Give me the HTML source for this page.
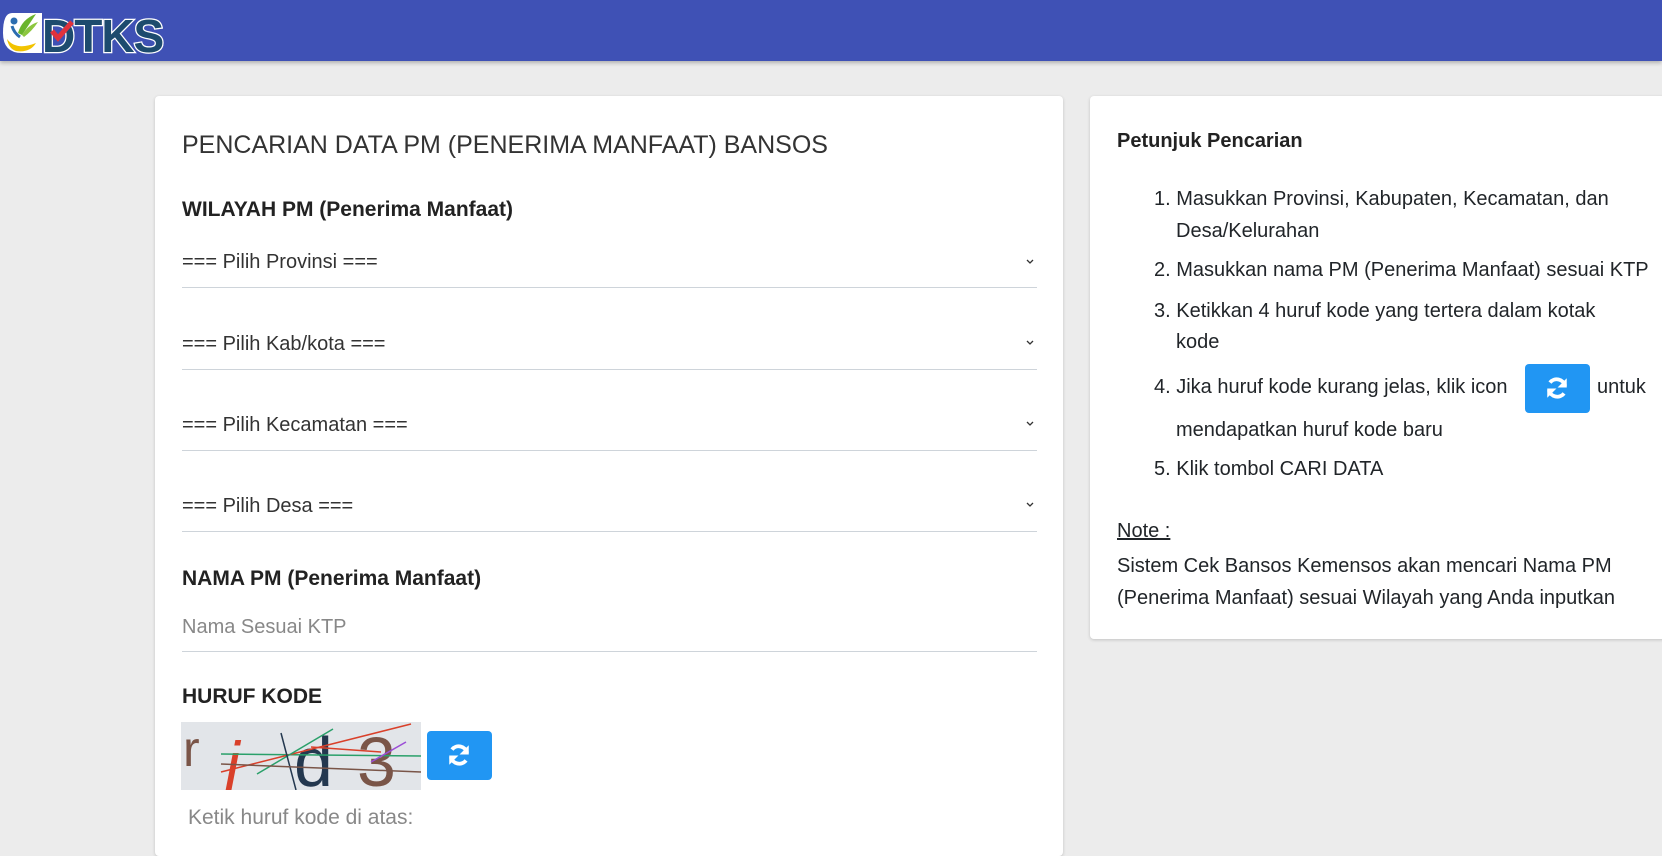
<!DOCTYPE html>
<html><head><meta charset="utf-8"><style>
*{margin:0;padding:0;box-sizing:border-box}
body{width:1662px;height:823px;overflow:hidden;background:#ececec;font-family:"Liberation Sans",sans-serif;color:#212529;position:relative}
.hdr{position:absolute;left:0;top:0;width:1662px;height:61px;background:#3f51b5;box-shadow:0 2px 4px rgba(0,0,0,.25)}
.card{position:absolute;background:#fff;border-radius:4px;box-shadow:0 1px 3px rgba(0,0,0,.18)}
.a{position:absolute;white-space:nowrap}
.t{font-size:20px}
.b{font-size:21px;font-weight:bold;color:#222}
.line{position:absolute;left:182px;width:855px;height:1px;background:#ced4da}
.chev{position:absolute;left:1025px;width:10px;height:10px}
.btn{position:absolute;background:#2196f3;border-radius:4px}
</style></head><body>
<div class="hdr">
<svg width="175" height="58" viewBox="0 0 175 58" style="position:absolute;left:0;top:3px">
<path d="M12 10 H42 V50 H22 Q3 50 3 30 Q3 10 12 10Z" fill="#fff"/>
<circle cx="14" cy="18" r="3.5" fill="#2b6cb0"/>
<path d="M12 23 Q14 30 20 34" stroke="#2b6cb0" stroke-width="3" fill="none"/>
<path d="M18 30 Q22 16 36 11 Q30 20 22 32Z" fill="#6ab42d"/>
<path d="M22 32 Q28 22 38 19 Q32 28 24 34Z" fill="#8cc63f"/>
<path d="M7 36 Q16 48 36 40 Q30 50 16 48 Q9 46 7 36Z" fill="#f2c300"/>
<text x="42" y="49" font-family="Liberation Sans" font-weight="bold" font-size="46" fill="#1d4b6e" stroke="#fff" stroke-width="2.5" paint-order="stroke" letter-spacing="-1">DTKS</text>
<path d="M52 28 L58 35 L72 19" stroke="#e0323c" stroke-width="5" fill="none"/>
</svg>
</div>

<div class="card" style="left:155px;top:96px;width:908px;height:760px"></div>
<div class="card" style="left:1090px;top:96px;width:600px;height:543px"></div>

<div class="a" style="left:182px;top:131px;font-size:25px;color:#333">PENCARIAN DATA PM (PENERIMA MANFAAT) BANSOS</div>
<div class="a b" style="left:182px;top:198px">WILAYAH PM (Penerima Manfaat)</div>

<div class="a t" style="left:182px;top:251px;color:#333">=== Pilih Provinsi ===</div>
<div class="line" style="top:287px"></div>
<div class="a t" style="left:182px;top:333px;color:#333">=== Pilih Kab/kota ===</div>
<div class="line" style="top:369px"></div>
<div class="a t" style="left:182px;top:414px;color:#333">=== Pilih Kecamatan ===</div>
<div class="line" style="top:450px"></div>
<div class="a t" style="left:182px;top:495px;color:#333">=== Pilih Desa ===</div>
<div class="line" style="top:531px"></div>
<svg class="chev" style="top:257px" viewBox="0 0 10 10"><path d="M2 3 L5 6 L8 3" stroke="#333" stroke-width="1.3" fill="none"/></svg>
<svg class="chev" style="top:338px" viewBox="0 0 10 10"><path d="M2 3 L5 6 L8 3" stroke="#333" stroke-width="1.3" fill="none"/></svg>
<svg class="chev" style="top:419px" viewBox="0 0 10 10"><path d="M2 3 L5 6 L8 3" stroke="#333" stroke-width="1.3" fill="none"/></svg>
<svg class="chev" style="top:500px" viewBox="0 0 10 10"><path d="M2 3 L5 6 L8 3" stroke="#333" stroke-width="1.3" fill="none"/></svg>

<div class="a b" style="left:182px;top:567px">NAMA PM (Penerima Manfaat)</div>
<div class="a t" style="left:182px;top:616px;color:#888">Nama Sesuai KTP</div>
<div class="line" style="top:651px"></div>
<div class="a b" style="left:182px;top:685px">HURUF KODE</div>

<svg style="position:absolute;left:181px;top:722px" width="240" height="68" viewBox="0 0 240 68">
<rect width="240" height="68" fill="#e2e5e9"/>
<text x="2" y="44" font-family="Liberation Sans" font-size="50" fill="#7a5548">r</text>
<text x="44" y="66" font-family="Liberation Sans" font-style="italic" font-size="66" fill="#d9402a">j</text>
<text x="113" y="64" font-family="Liberation Sans" font-size="70" fill="#24384f">d</text>
<text x="176" y="64" font-family="Liberation Sans" font-size="70" fill="#7a5548">3</text>
<line x1="40" y1="32" x2="240" y2="34" stroke="#2aa06a" stroke-width="1.5"/>
<line x1="40" y1="50" x2="230" y2="2" stroke="#d9402a" stroke-width="1.5"/>
<line x1="76" y1="52" x2="152" y2="7" stroke="#2aa06a" stroke-width="1.5"/>
<line x1="100" y1="11" x2="115" y2="68" stroke="#24384f" stroke-width="1.5"/>
<line x1="40" y1="42" x2="240" y2="50" stroke="#7a5548" stroke-width="1.5"/>
<line x1="130" y1="25" x2="200" y2="30" stroke="#d9402a" stroke-width="1.5"/>
<line x1="190" y1="40" x2="225" y2="20" stroke="#9b4dd6" stroke-width="1.5"/>
</svg>
<div class="btn" style="left:427px;top:731px;width:65px;height:49px">
<svg width="26" height="26" viewBox="0 0 24 24" style="position:absolute;left:19px;top:11px"><path d="M19.5 10 A8 8 0 0 0 5.5 7" stroke="#fff" stroke-width="3.5" fill="none"/><path d="M21 3 V11.5 H12.5Z" fill="#fff"/><path d="M4.5 14 A8 8 0 0 0 18.5 17" stroke="#fff" stroke-width="3.5" fill="none"/><path d="M3 21 V12.5 H11.5Z" fill="#fff"/></svg>
</div>
<div class="a" style="left:188px;top:806px;color:#888;font-size:21px">Ketik huruf kode di atas:</div>

<div class="a" style="left:1117px;top:130px;font-weight:bold;font-size:20px;color:#222">Petunjuk Pencarian</div>
<div class="a t" style="left:1154px;top:188px">1. Masukkan Provinsi, Kabupaten, Kecamatan, dan</div>
<div class="a t" style="left:1176px;top:220px">Desa/Kelurahan</div>
<div class="a t" style="left:1154px;top:259px">2. Masukkan nama PM (Penerima Manfaat) sesuai KTP</div>
<div class="a t" style="left:1154px;top:300px">3. Ketikkan 4 huruf kode yang tertera dalam kotak</div>
<div class="a t" style="left:1176px;top:331px">kode</div>
<div class="a t" style="left:1154px;top:376px">4. Jika huruf kode kurang jelas, klik icon</div>
<div class="btn" style="left:1525px;top:364px;width:65px;height:49px">
<svg width="26" height="26" viewBox="0 0 24 24" style="position:absolute;left:19px;top:11px"><path d="M19.5 10 A8 8 0 0 0 5.5 7" stroke="#fff" stroke-width="3.5" fill="none"/><path d="M21 3 V11.5 H12.5Z" fill="#fff"/><path d="M4.5 14 A8 8 0 0 0 18.5 17" stroke="#fff" stroke-width="3.5" fill="none"/><path d="M3 21 V12.5 H11.5Z" fill="#fff"/></svg>
</div>
<div class="a t" style="left:1597px;top:376px">untuk</div>
<div class="a t" style="left:1176px;top:419px">mendapatkan huruf kode baru</div>
<div class="a t" style="left:1154px;top:458px">5. Klik tombol CARI DATA</div>
<div class="a t" style="left:1117px;top:520px;text-decoration:underline">Note :</div>
<div class="a t" style="left:1117px;top:555px">Sistem Cek Bansos Kemensos akan mencari Nama PM</div>
<div class="a t" style="left:1117px;top:587px">(Penerima Manfaat) sesuai Wilayah yang Anda inputkan</div>
</body></html>
